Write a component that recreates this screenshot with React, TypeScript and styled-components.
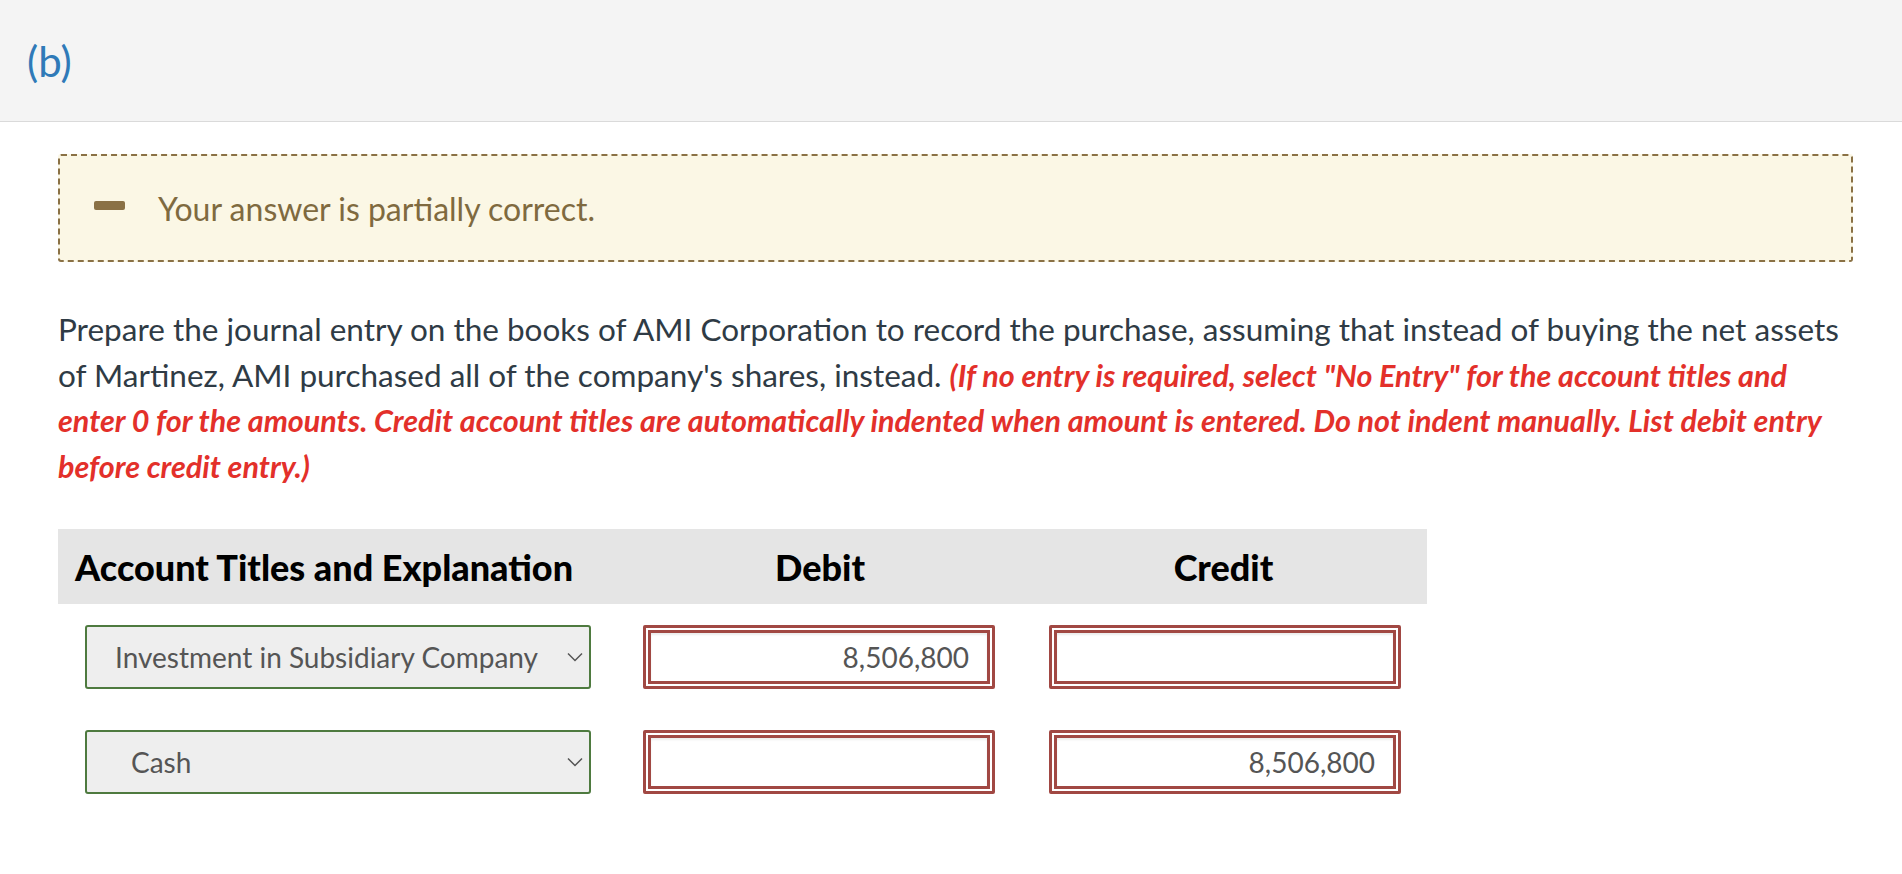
import React from "react";
import styled, { createGlobalStyle } from "styled-components";

const Global = createGlobalStyle`
  html, body { margin: 0; padding: 0; background: #ffffff; }
  body { font-family: Lato, "Open Sans", sans-serif; }
  * { box-sizing: border-box; }
`;

const Page = styled.div`
  width: 1902px;
  min-height: 874px;
  background: #fff;
`;

const PartHeader = styled.header`
  height: 122px;
  background: #f4f4f4;
  border-bottom: 1px solid #dadada;
  display: flex;
  align-items: center;
  padding-left: 27px;
`;

const PartLabel = styled.h2`
  margin: 0;
  font-family: Lato, sans-serif;
  font-weight: 400;
  font-size: 42px;
  color: #2f7ab8;
  line-height: 1;
`;

const Content = styled.main`
  padding: 32px 49px 0 58px;
`;

const Alert = styled.div`
  height: 108px;
  border: 2px dashed #8a7145;
  border-radius: 3px;
  background: #fbf7e5;
  display: flex;
  align-items: center;
  padding-left: 34px;
  gap: 33px;
`;

const MinusIcon = styled.span`
  display: block;
  width: 31px;
  height: 9px;
  border-radius: 2px;
  background: #8a7145;
  margin-top: -6px;
`;

const AlertText = styled.span`
  font-size: 32px;
  color: #7f6a3f;
`;

const Prompt = styled.p`
  margin: 45px 0 0;
  font-size: 31.5px;
  line-height: 45.5px;
  color: #2f3b45;
`;

const Instruction = styled.em`
  font-style: italic;
  font-weight: 700;
  font-size: 30.5px;
  color: #e3302a;
`;

const Table = styled.div`
  margin-top: 40px;
  width: 1369px;
`;

const HeaderRow = styled.div`
  display: grid;
  grid-template-columns: 562px 400px 407px;
  height: 75px;
  align-items: center;
  background: #e5e5e5;
`;

const HeadCell = styled.div<{ $align?: "left" | "center" }>`
  font-family: Lato, sans-serif;
  font-weight: 900;
  font-size: 36px;
  color: #000;
  text-align: ${(p) => p.$align ?? "center"};
  padding-left: ${(p) => (p.$align === "left" ? "17px" : "0")};
`;

const EntryRow = styled.div`
  display: grid;
  grid-template-columns: 562px 400px 407px;
  align-items: center;
  margin-top: 21px;
  & + & {
    margin-top: 41px;
  }
`;

const SelectBox = styled.div<{ $indent: boolean }>`
  margin-left: 27px;
  width: 506px;
  height: 64px;
  border: 2px solid #4e7a3f;
  border-radius: 3px;
  background: #eeeeee;
  display: flex;
  align-items: center;
  justify-content: space-between;
  padding: 0 6px 0 ${(p) => (p.$indent ? "44px" : "28px")};
  font-size: 28px;
  color: #555;
`;

const Chevron = () => (
  <svg width="16" height="10" viewBox="0 0 16 10" fill="none">
    <path d="M1 1.5L8 8.5L15 1.5" stroke="#555" strokeWidth="1.5" />
  </svg>
);

const AmountCell = styled.div<{ $side: "debit" | "credit" }>`
  display: flex;
  padding-left: ${(p) => (p.$side === "debit" ? "23px" : "29px")};
`;

const AmountInput = styled.input`
  width: 352px;
  height: 64px;
  border: 8px double #a14843;
  border-radius: 2px;
  background: #fff;
  box-shadow: inset 0 2px 2px rgba(0, 0, 0, 0.08);
  text-align: right;
  padding: 0 18px 0 10px;
  font-family: Lato, sans-serif;
  font-size: 28px;
  color: #555;
  outline: none;
`;

const rows = [
  { account: "Investment in Subsidiary Company", indent: false, debit: "8,506,800", credit: "" },
  { account: "Cash", indent: true, debit: "", credit: "8,506,800" },
];

export default function App() {
  return (
    <Page>
      <Global />
      <PartHeader>
        <PartLabel>(b)</PartLabel>
      </PartHeader>
      <Content>
        <Alert>
          <MinusIcon />
          <AlertText>Your answer is partially correct.</AlertText>
        </Alert>
        <Prompt>
          Prepare the journal entry on the books of AMI Corporation to record the purchase, assuming that instead of buying the net assets of Martinez, AMI purchased all of the company's shares, instead.{" "}
          <Instruction>
            (If no entry is required, select "No Entry" for the account titles and enter 0 for the amounts. Credit account titles are automatically indented when amount is entered. Do not indent manually. List debit entry before credit entry.)
          </Instruction>
        </Prompt>
        <Table>
          <HeaderRow>
            <HeadCell $align="left">Account Titles and Explanation</HeadCell>
            <HeadCell>Debit</HeadCell>
            <HeadCell>Credit</HeadCell>
          </HeaderRow>
          {rows.map((r) => (
            <EntryRow key={r.account}>
              <SelectBox $indent={r.indent}>
                <span>{r.account}</span>
                <Chevron />
              </SelectBox>
              <AmountCell $side="debit">
                <AmountInput readOnly value={r.debit} />
              </AmountCell>
              <AmountCell $side="credit">
                <AmountInput readOnly value={r.credit} />
              </AmountCell>
            </EntryRow>
          ))}
        </Table>
      </Content>
    </Page>
  );
}
